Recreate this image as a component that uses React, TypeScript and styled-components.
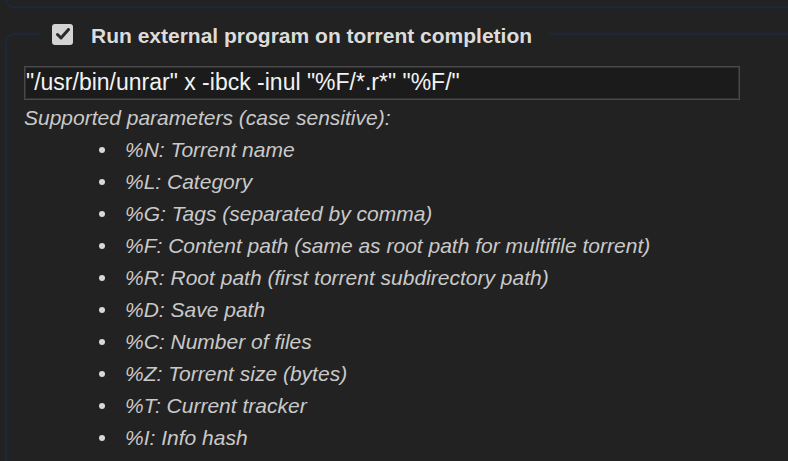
import React from "react";
import styled, { createGlobalStyle } from "styled-components";

const GlobalStyle = createGlobalStyle`
  html, body {
    margin: 0;
    padding: 0;
    background: #222222;
    font-family: "Liberation Sans", Arial, sans-serif;
    overflow: hidden;
  }
`;

const Page = styled.div`
  width: 788px;
  height: 461px;
  padding-left: 5px;
  box-sizing: border-box;
  overflow: hidden;
  display: flex;
  flex-direction: column;
`;

const PrevFieldsetEnd = styled.div`
  flex: none;
  height: 6px;
  margin-right: -40px;
  border: 2px solid #1c273a;
  border-top: none;
  border-radius: 0 0 9px 9px;
`;

const Fieldset = styled.fieldset`
  flex: 1 0 auto;
  margin: 15px -40px 0 0;
  padding: 21px 0 40px 17px;
  border: 2px solid #1c273a;
  border-bottom: none;
  border-radius: 9px 9px 0 0;
  min-width: 0;
`;

const Legend = styled.legend`
  margin-left: 16px;
  padding: 0 17px 0 12px;
  display: flex;
  align-items: center;
  gap: 18px;
  height: 22px;
`;

const CheckBox = styled.span`
  flex: none;
  width: 21px;
  height: 21px;
  border-radius: 3px;
  background: #d4d4d4;
  display: inline-flex;
  align-items: center;
  justify-content: center;
`;

const LegendLabel = styled.label`
  font-size: 21px;
  font-weight: bold;
  color: #dcdcdc;
  white-space: nowrap;
  margin-top: 4px;
`;

const CommandInput = styled.input`
  display: block;
  box-sizing: border-box;
  width: 716px;
  height: 34px;
  margin: 0;
  padding: 0 2px 1px 1px;
  background: #1b1b1b;
  border: 1px solid #4a4a4a;
  outline: 1px solid #303030;
  outline-offset: -2px;
  color: #f2f2f2;
  font-family: "Liberation Sans", Arial, sans-serif;
  font-size: 23px;
`;

const Hint = styled.div`
  font-style: italic;
  font-size: 21px;
  color: #c9c9c9;
  line-height: 32px;
  margin-top: 2px;
`;

const ParamList = styled.ul`
  margin: 0;
  padding-left: 75px;
  list-style: none;
`;

const ParamItem = styled.li`
  display: flex;
  align-items: center;
  line-height: 32px;

  &::before {
    content: "";
    flex: none;
    width: 6px;
    height: 6px;
    border-radius: 50%;
    background: #d8d8d8;
    margin-right: 20px;
  }
`;

const params = [
  "%N: Torrent name",
  "%L: Category",
  "%G: Tags (separated by comma)",
  "%F: Content path (same as root path for multifile torrent)",
  "%R: Root path (first torrent subdirectory path)",
  "%D: Save path",
  "%C: Number of files",
  "%Z: Torrent size (bytes)",
  "%T: Current tracker",
  "%I: Info hash",
];

export default function App() {
  return (
    <>
      <GlobalStyle />
      <Page>
        <PrevFieldsetEnd />
        <Fieldset>
          <Legend>
            <CheckBox>
              <svg width="14" height="12" viewBox="0 0 14 12">
                <path
                  d="M1.5 6.5 L5 10 L12.5 1.5"
                  fill="none"
                  stroke="#2a2a2a"
                  strokeWidth="3"
                  strokeLinecap="round"
                  strokeLinejoin="round"
                />
              </svg>
            </CheckBox>
            <LegendLabel>Run external program on torrent completion</LegendLabel>
          </Legend>
          <CommandInput
            type="text"
            readOnly
            value={'"/usr/bin/unrar" x -ibck -inul "%F/*.r*" "%F/"'}
          />
          <Hint>
            Supported parameters (case sensitive):
            <ParamList>
              {params.map((p) => (
                <ParamItem key={p}>{p}</ParamItem>
              ))}
            </ParamList>
          </Hint>
        </Fieldset>
      </Page>
    </>
  );
}
